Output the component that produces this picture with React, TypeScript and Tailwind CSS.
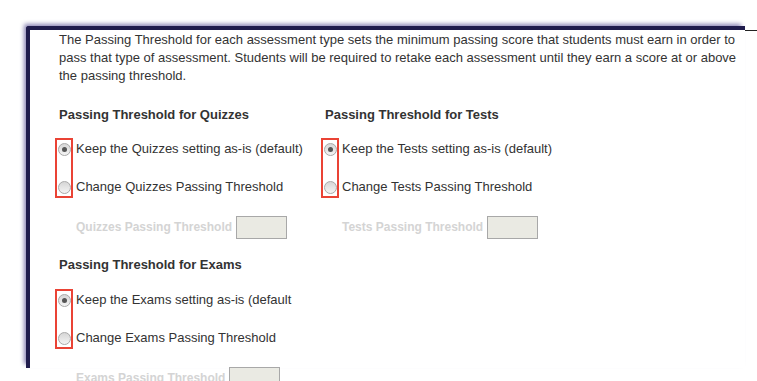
import React from 'react';

interface RadioProps {
  label: string;
  checked?: boolean;
}

function Radio({ label, checked = false }: RadioProps) {
  return (
    <div className="flex h-[38px] items-center">
      <span className="ml-[-1px] flex h-[13px] w-[13px] items-center justify-center rounded-full border border-[#a9a9a9] bg-gradient-to-b from-[#d6d6d6] to-[#f4f4f4]">
        {checked && <span className="h-[5px] w-[5px] rounded-full bg-[#555]" />}
      </span>
      <span className="ml-[5px] text-[#333]">{label}</span>
    </div>
  );
}

interface SectionProps {
  kind: string;
  keepLabel?: string;
  gap?: string;
}

function ThresholdSection({ kind, keepLabel, gap = 'mt-[6px]' }: SectionProps) {
  return (
    <div className="w-[266px]">
      <h3 className="h-[18px] font-bold leading-[18px] text-[#333]">Passing Threshold for {kind}</h3>
      <div className={`relative ${gap}`}>
        {/* red annotation box */}
        <div className="pointer-events-none absolute left-[-4px] top-[8px] h-[60px] w-[18px] border-2 border-[#ea4335]" />
        <Radio label={keepLabel ?? `Keep the ${kind} setting as-is (default)`} checked />
        <Radio label={`Change ${kind} Passing Threshold`} />
      </div>
      <div className="flex h-[42px] items-center pl-[17px]">
        <span className="text-[12px] font-bold text-[#d4d4d4]">{kind} Passing Threshold</span>
        <span className="ml-[4px] h-[23px] w-[51px] border border-[#a8a8a8] bg-[#eaeae3]" />
      </div>
    </div>
  );
}

export default function App() {
  return (
    <div
      className="flex h-[381px] w-[757px] items-start overflow-hidden bg-white text-[13px] leading-[18px]"
      style={{ fontFamily: '"Liberation Sans", Arial, sans-serif' }}
    >
      <div className="ml-[26px] mt-[26px] h-[342px] w-[719px] shrink-0 rounded-tl-[3px] border-l-4 border-t-4 border-[#1f1b4c] bg-white pl-[29px] pt-[1px] shadow-[-3px_-3px_4px_-1px_rgba(60,50,130,0.6)]">
        <p className="w-[684px] text-[#333]">
          The Passing Threshold for each assessment type sets the minimum passing score that students must earn in order to
          pass that type of assessment. Students will be required to retake each assessment until they earn a score at or above
          the passing threshold.
        </p>

        <div className="mt-[21px] flex">
          <ThresholdSection kind="Quizzes" />
          <ThresholdSection kind="Tests" />
        </div>

        <div className="mt-[8px]">
          <ThresholdSection kind="Exams" keepLabel="Keep the Exams setting as-is (default" gap="mt-[7px]" />
        </div>
      </div>
      <div className="mt-[30px] h-px flex-1 bg-[#222]" />
    </div>
  );
}
